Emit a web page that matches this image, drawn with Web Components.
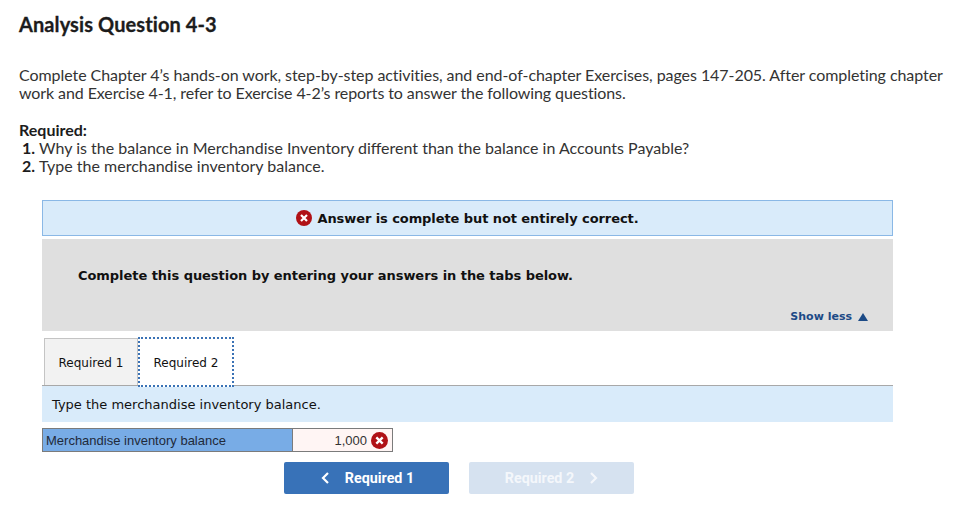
<!DOCTYPE html>
<html>
<head>
<meta charset="utf-8">
<style>
html, body { margin: 0; background: #fff; }
body { width: 975px; height: 515px; overflow: hidden; font-family: Lato, sans-serif; color: #222; }
</style>
</head>
<body>
<question-page></question-page>
<script>
const X_ICON = `<svg width="16" height="16" viewBox="0 0 16 16"><circle cx="8" cy="8" r="8" fill="#b01116"/><path d="M5 5 L11 11 M11 5 L5 11" stroke="#fff" stroke-width="2.2" fill="none"/></svg>`;

class QuestionIntro extends HTMLElement {
	constructor() {
		super();
		this.attachShadow({mode: 'open'}).innerHTML = `
<style>
:host { display: block; padding: 0 19px; font: 16px/18px Lato, sans-serif; color: #333; }
h1 { margin: 0; padding-top: 12px; font-size: 20px; line-height: 24px; font-weight: 700; letter-spacing: 0.1px; -webkit-text-stroke: 0.3px #1c1c1c; color: #1c1c1c; }
p { margin: 0; white-space: nowrap; }
.text { margin-top: 30px; letter-spacing: -0.06px; }
.tight { letter-spacing: -0.095px; }
.req { margin-top: 19px; }
b { color: #1c1c1c; }
.n { display: inline-block; width: 16px; text-align: right; margin-right: 4px; font-weight: 700; color: #1c1c1c; }
</style>
<h1>Analysis Question 4-3</h1>
<p class="text">Complete Chapter 4’s hands-on work, step-by-step activities, and end-of-chapter Exercises, pages 147-205. After completing chapter<br><span class="tight">work and Exercise 4-1, refer to Exercise 4-2’s reports to answer the following questions.</span></p>
<p class="req"><b>Required:</b><br><span class="n">1.</span>Why is the balance in Merchandise Inventory different than the balance in Accounts Payable?<br><span class="n">2.</span>Type the merchandise inventory balance.</p>`;
	}
}

class AnswerBanner extends HTMLElement {
	constructor() {
		super();
		this.attachShadow({mode: 'open'}).innerHTML = `
<style>
:host { display: flex; align-items: center; justify-content: center; gap: 5px; box-sizing: border-box; height: 36px; background: #d9ebfa; border: 1px solid #8ab8e6; font: 700 13px "DejaVu Sans", sans-serif; letter-spacing: -0.08px; color: #111; }
svg { display: block; }
</style>
${X_ICON}<slot></slot>`;
	}
}

class InstructionPanel extends HTMLElement {
	constructor() {
		super();
		this.attachShadow({mode: 'open'}).innerHTML = `
<style>
:host { display: flex; flex-direction: column; justify-content: space-between; box-sizing: border-box; height: 92px; margin-top: 3px; padding: 29px 25px 6px 36px; background: #dfdfdf; font: 700 13px/16px "DejaVu Sans", sans-serif; letter-spacing: -0.05px; color: #111; }
.less { align-self: flex-end; font-size: 11px; letter-spacing: 0; color: #1c4a86; display: flex; align-items: center; gap: 6px; }
i { width: 0; height: 0; border-left: 5px solid transparent; border-right: 5px solid transparent; border-bottom: 8px solid #1c4a86; }
</style>
<div><slot></slot></div>
<div class="less">Show less <i></i></div>`;
	}
}

class TabStrip extends HTMLElement {
	constructor() {
		super();
		this.attachShadow({mode: 'open'}).innerHTML = `
<style>
:host { display: flex; box-sizing: border-box; height: 49px; margin-top: 6px; padding: 0 0 0 2px; border-bottom: 1px solid #a8a8a8; font: 12px "DejaVu Sans", sans-serif; color: #111; }
div { display: flex; align-items: center; justify-content: center; box-sizing: border-box; padding-top: 1px; }
.a { width: 94px; height: 47px; margin-top: 1px; background: #f2f2f2; border: 1px solid #c4c4c4; border-bottom: 0; }
.b { width: 96px; height: 50px; background: #fff; border: 2px dotted #3a72b5; position: relative; z-index: 1; }
</style>
<div class="a">Required 1</div><div class="b">Required 2</div>`;
	}
}

class AnswerRow extends HTMLElement {
	constructor() {
		super();
		this.attachShadow({mode: 'open'}).innerHTML = `
<style>
:host { display: flex; box-sizing: border-box; width: 351px; height: 24px; border: 1px solid #7b7b7b; font: 13px "Liberation Sans", sans-serif; color: #1f2a3a; }
.l { width: 250px; box-sizing: border-box; padding-left: 3px; display: flex; align-items: center; background: #78ace6; border-right: 1px solid #7b7b7b; }
.v { flex: 1; display: flex; align-items: center; justify-content: flex-end; gap: 4px; padding-right: 4px; background: #fff5f4; color: #333; }
svg { display: block; width: 17px; height: 17px; }
</style>
<div class="l"><slot></slot></div>
<div class="v">1,000 ${X_ICON}</div>`;
	}
}

class NavButton extends HTMLElement {
	constructor() {
		super();
		this.attachShadow({mode: 'open'}).innerHTML = `
<style>
:host { display: flex; align-items: center; justify-content: center; gap: 15px; box-sizing: border-box; width: 165px; height: 32px; padding-left: 2px; border-radius: 2px; background: #3872b8; color: #fff; font: 700 14.3px Roboto, sans-serif; }
:host([disabled]) { padding-left: 0; background: #d6e2f0; color: #f4f7fb; }
</style>
<slot></slot>`;
	}
}

class QuestionPage extends HTMLElement {
	constructor() {
		super();
		const chevron = (d) => `<svg width="9" height="12" viewBox="0 0 9 12"><path d="${d}" fill="none" stroke="currentColor" stroke-width="2.2"/></svg>`;
		this.attachShadow({mode: 'open'}).innerHTML = `
<style>
:host { display: block; }
.body { width: 851px; margin: 25px 0 0 42px; }
.prompt { box-sizing: border-box; height: 36px; padding-left: 10px; display: flex; align-items: center; background: #d9ebfa; font: 13px "DejaVu Sans", sans-serif; color: #111; }
answer-row { margin-top: 6px; }
.nav { display: flex; gap: 20px; margin: 10px 0 0 242px; }
</style>
<question-intro></question-intro>
<div class="body">
	<answer-banner>Answer is complete but not entirely correct.</answer-banner>
	<instruction-panel>Complete this question by entering your answers in the tabs below.</instruction-panel>
	<tab-strip></tab-strip>
	<div class="prompt">Type the merchandise inventory balance.</div>
	<answer-row>Merchandise inventory balance</answer-row>
	<div class="nav">
		<nav-button>${chevron('M7 1 L2 6 L7 11')}<span>Required 1</span></nav-button>
		<nav-button disabled><span>Required 2</span>${chevron('M2 1 L7 6 L2 11')}</nav-button>
	</div>
</div>`;
	}
}

customElements.define('question-intro', QuestionIntro);
customElements.define('answer-banner', AnswerBanner);
customElements.define('instruction-panel', InstructionPanel);
customElements.define('tab-strip', TabStrip);
customElements.define('answer-row', AnswerRow);
customElements.define('nav-button', NavButton);
customElements.define('question-page', QuestionPage);
</script>
</body>
</html>
